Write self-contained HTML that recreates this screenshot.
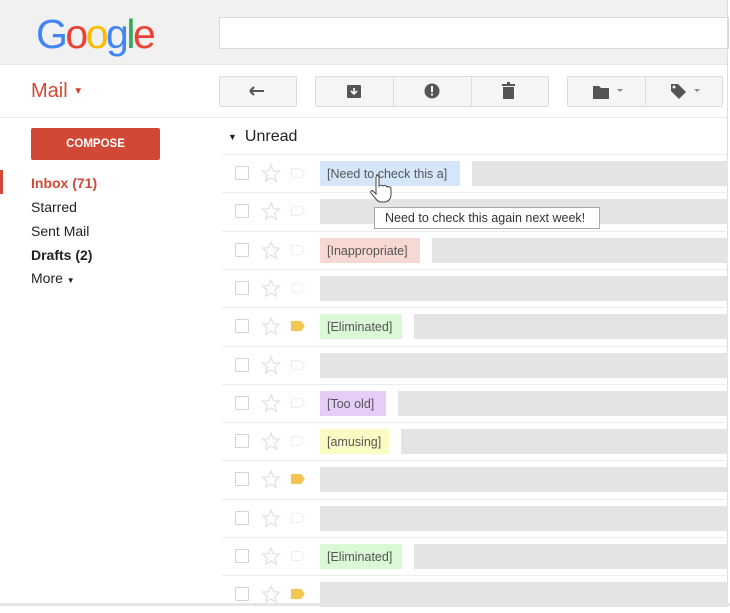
<!DOCTYPE html>
<html><head><style>
*{margin:0;padding:0;box-sizing:border-box}
body{width:730px;height:606px;background:#fff;font-family:"Liberation Sans",Arial,sans-serif;position:relative;overflow:hidden}
.a{position:absolute}
.hdr{left:0;top:0;width:728px;height:65px;background:#f1f1f1;border-bottom:1px solid #e5e5e5}
.search{left:219px;top:17px;width:510px;height:32px;background:#fff;border:1px solid #d9d9d9}
.logo{left:36px;top:11px;font-size:41px;letter-spacing:-2.5px;font-weight:400}
.btn{top:76px;height:31px;background:#f5f5f5;border:1px solid #dcdcdc;border-radius:2px}
.sep{top:76px;width:1px;height:31px;background:#dcdcdc}
.nav{left:31px;font-size:14px;color:#222}
.row{left:222px;width:506px;height:38px;border-top:1px solid #ececec}
.cb{left:235px;width:14px;height:14px;border:1.5px solid #d4d4d4;border-radius:1px}
.lbl{left:320px;height:25px;font-size:12.5px;color:#555;padding:6px 0 0 7px}
.bar{height:25px;background:#e4e4e4;right:2px}
</style></head><body>
<div class="a hdr"></div>
<div class="a search"></div>
<div class="a logo"><span style="color:#4285f4">G</span><span style="color:#ea4335">o</span><span style="color:#fbbc05">o</span><span style="color:#4285f4">g</span><span style="color:#34a853">l</span><span style="color:#ea4335">e</span></div>
<div class="a" style="left:31px;top:80px;font-size:20px;color:#d14836">Mail <span style="font-size:10px;vertical-align:middle">▼</span></div>
<div class="a" style="left:0;top:117px;width:728px;height:1px;background:#e8e8e8"></div>
<div class="a btn" style="left:219px;width:78px"></div>
<div class="a btn" style="left:315px;width:234px"></div>
<div class="a sep" style="left:393px"></div><div class="a sep" style="left:471px"></div>
<div class="a btn" style="left:567px;width:156px"></div>
<div class="a sep" style="left:645px"></div>
<svg class="a" style="left:0;top:0" width="730" height="120">
<path d="M250 91h14M250 91l4-4M250 91l4 4" stroke="#555" stroke-width="2" fill="none"/>
<rect x="347" y="85" width="14" height="13" rx="1" fill="#555"/><path d="M354 88v6M351 91l3 3 3-3" stroke="#fff" stroke-width="1.6" fill="none"/>
<circle cx="432" cy="91" r="7.5" fill="#555"/><rect x="431" y="86" width="2" height="6" fill="#fff"/><rect x="431" y="93.5" width="2" height="2" fill="#fff"/>
<rect x="502" y="84" width="13" height="2" fill="#555"/><rect x="507" y="82" width="3" height="2" fill="#555"/><rect x="503" y="87" width="11" height="12" fill="#555"/>
<path d="M593 86h6l2 2h8v11h-16z" fill="#555"/><path d="M617 89l3 3 3-3z" fill="#888"/>
<path d="M671 84h7l8 8-7 7-8-8z" fill="#555"/><circle cx="674" cy="87" r="1.5" fill="#f5f5f5"/><path d="M694 89l3 3 3-3z" fill="#888"/>
</svg>
<div class="a" style="left:31px;top:128px;width:129px;height:32px;background:#d14836;border-radius:2px;color:#fff;font-size:11.5px;font-weight:bold;text-align:center;line-height:32px">COMPOSE</div>
<div class="a" style="left:0;top:170px;width:3px;height:24px;background:#d14836"></div>
<div class="a nav" style="top:175px;color:#d14836;font-weight:bold">Inbox (71)</div>
<div class="a nav" style="top:199px">Starred</div>
<div class="a nav" style="top:223px">Sent Mail</div>
<div class="a nav" style="top:247px;font-weight:bold">Drafts (2)</div>
<div class="a nav" style="top:270px">More <span style="font-size:8px">▼</span></div>
<div class="a" style="left:228px;top:128px;font-size:16px;color:#222"><span style="font-size:9px;vertical-align:middle;margin-right:8px">▼</span>Unread</div>
<div class="a" style="left:727px;top:0;width:1px;height:606px;background:#ddd"></div>
<div id="rows"></div>
<div class="a" style="left:0;top:603px;width:730px;height:3px;background:#e6e6e6"></div>
<script>
var L=[["[Need to check this a]","#d6e6fa",140,0],[null,0,0,0],["[Inappropriate]","#f8d8d2",100,0],[null,0,0,0],["[Eliminated]","#daf7d6",82,1],[null,0,0,0],["[Too old]","#e6cdf7",66,0],["[amusing]","#fbfbc4",69,0],[null,0,0,1],[null,0,0,0],["[Eliminated]","#daf7d6",82,0],[null,0,0,1]];
var h="";
L.forEach(function(r,i){var t=154+i*38.3,c=t+19;
h+='<div class="a row" style="top:'+t+'px"></div>';
h+='<div class="a cb" style="top:'+(c-7)+'px"></div>';
h+='<svg class="a" style="left:261px;top:'+(c-10)+'px" width="46" height="20"><path d="M10 2l2.4 5.6 6 .5-4.6 4 1.4 6L10 15l-5.2 3.1 1.4-6-4.6-4 6-.5z" fill="none" stroke="#e2e2e2" stroke-width="1.3"/>'+(r[3]?'<path d="M30 5h10l4 5-4 5H30z" fill="#f5c451"/>':'<path d="M30.5 5.5h9.5l3.5 4.5-3.5 4.5h-9.5z" fill="none" stroke="#eee"/>')+'</svg>';
var bx=320;
if(r[0]){h+='<div class="a lbl" style="top:'+(c-12)+'px;width:'+r[2]+'px;background:'+r[1]+'">'+r[0]+'</div>';bx=320+r[2]+12;}
h+='<div class="a bar" style="left:'+bx+'px;top:'+(c-12)+'px"></div>';
});
document.getElementById("rows").innerHTML=h;
</script>
<div class="a" style="left:374px;top:207px;width:226px;height:22px;background:#fff;border:1px solid #aaa;font-size:12.5px;color:#333;padding:3px 0 0 10px">Need to check this again next week!</div>
<svg class="a" style="left:368px;top:173px" width="30" height="32"><path d="M8 2c2 0 3 1 3 3v8c1-1 3-1 4 0 1-1 3-1 4 1 1-1 4 0 4 2v6c0 4-3 7-7 7h-3c-3 0-4-2-6-4l-4-5c-1-2 1-3 2-2l3 3V5c0-2 1-3 2-3z" fill="#fff" stroke="#444" stroke-width="1"/></svg>
</body></html>
